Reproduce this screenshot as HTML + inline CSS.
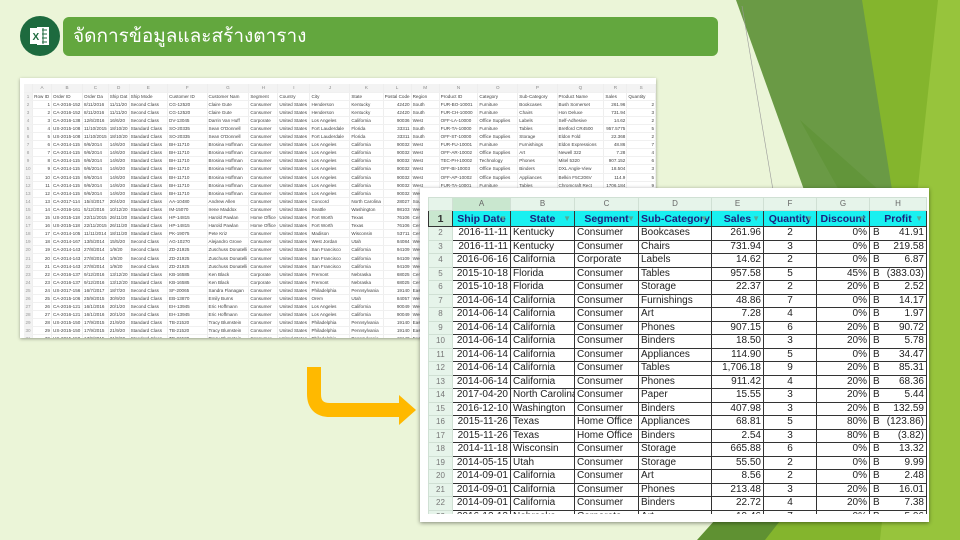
<!DOCTYPE html>
<html><head><meta charset="utf-8"><style>
*{margin:0;padding:0;box-sizing:border-box}
body{width:960px;height:540px;overflow:hidden;background:#ebf5d8;position:relative;font-family:"Liberation Sans",sans-serif}
.bg{position:absolute;left:0;top:0}
.title{position:absolute;left:63px;top:17px;width:655px;height:39px;background:#63a73e;border-radius:6px;color:#fff;font-family:"Liberation Sans","Noto Sans CJK SC",sans-serif;font-size:19px;line-height:39px;padding-left:10px}
.logo{position:absolute;left:20px;top:16px;width:40px;height:40px;border-radius:50%;background:#1d6a3e}
.small{position:absolute;left:20px;top:78px;width:636px;height:260px;background:#fff;box-shadow:0 1px 3px rgba(0,0,0,.35);overflow:hidden}
.small table{border-collapse:collapse;font-size:4.6px;color:#444;margin:6px 0 0 4px;table-layout:fixed}
.small td{height:8.1px;border-right:1px solid #eee;border-bottom:1px solid #f0f0f0;white-space:nowrap;overflow:hidden;padding:0 1px}
.small tr:first-child td{background:#f3f3f3;text-align:center;color:#888}
.small td:first-child{background:#f3f3f3;color:#999;text-align:center}
.big{position:absolute;left:420px;top:188px;width:509px;height:334px;background:#fff;box-shadow:0 1px 4px rgba(0,0,0,.45);overflow:hidden}
.big table{position:absolute;left:8px;top:9px;border-collapse:collapse;table-layout:fixed;font-size:10px;color:#222;width:498px}
.big td{height:13.5px;border:1px solid #333;padding:0 2px;white-space:nowrap;overflow:hidden;line-height:12px}
.big tr.L td{background:#e6f4ea;color:#666;font-size:8px;text-align:center;border:1px solid #d0e0d4;height:13px}
.big tr.L td.a{background:#c9e7cf}
.big tr.H td{background:#19f0f0;font-weight:bold;color:#1a237e;text-align:center;height:16px;border:1px solid #333;position:relative;font-size:10.5px}
.big tr.H td i{position:absolute;right:3px;top:2px;color:#5a9;font-size:8px;font-style:normal;font-weight:normal}
.big td.n{background:#e6f4ea;color:#777;font-size:8px;text-align:center;border:1px solid #d0e0d4}
.r{text-align:right}.c{text-align:center}
.b{float:left;padding-left:1px}
</style></head><body>
<svg class="bg" width="960" height="540">
<polygon points="862,0 960,0 960,540 760,540" fill="#84b52d"/>
<polygon points="938,0 960,0 960,540 880,540" fill="#97c43c"/>
<polygon points="736,0 862,0 930,430 890,430" fill="#6a9a45"/>
<polygon points="800,120 890,200 900,300" fill="#62953a"/>
<polygon points="697,540 765,540 820,470 760,470" fill="#5f9132"/>
<line x1="742" y1="6" x2="773" y2="190" stroke="#999" stroke-width="0.6"/>
</svg>
<div class="logo"><svg width="40" height="40"><rect x="17" y="11" width="12" height="18" fill="#fff"/><path d="M19 14h8M19 18h8M19 22h8M19 26h8M23 12v16" stroke="#1d6a3e" stroke-width="1"/><rect x="10" y="12" width="12" height="16" fill="#fff"/><text x="12.5" y="24" font-size="10" font-family="Liberation Sans" fill="#1d6a3e" font-weight="bold">X</text></svg></div>
<div class="title">จัดการข้อมูลและสร้างตาราง</div>

<div class="small"><table>
<colgroup><col width="10"><col width="20"><col width="32"><col width="22"><col width="20"><col width="44"><col width="54"><col width="34"><col width="30"><col width="34"><col width="46"><col width="34"><col width="24"><col width="42"><col width="44"><col width="48"><col width="50"><col width="36"><col width="24"><col width="40"></colgroup>
<tr><td></td><td>A</td><td>B</td><td>C</td><td>D</td><td>E</td><td>F</td><td>G</td><td>H</td><td>I</td><td>J</td><td>K</td><td>L</td><td>M</td><td>N</td><td>O</td><td>P</td><td>Q</td><td>R</td><td>S</td></tr>
<tr><td>1</td><td>Row ID</td><td>Order ID</td><td>Order Da</td><td>Ship Dat</td><td>Ship Mode</td><td>Customer ID</td><td>Customer Nam</td><td>Segment</td><td>Country</td><td>City</td><td>State</td><td>Postal Code</td><td>Region</td><td>Product ID</td><td>Category</td><td>Sub-Category</td><td>Product Name</td><td>Sales</td><td>Quantity</td></tr>
<tr><td>2</td><td class="r">1</td><td>CA-2016-152</td><td>8/11/2016</td><td>11/11/20</td><td>Second Class</td><td>CG-12520</td><td>Claire Gute</td><td>Consumer</td><td>United States</td><td>Henderson</td><td>Kentucky</td><td class="r">42420</td><td>South</td><td>FUR-BO-10001</td><td>Furniture</td><td>Bookcases</td><td>Bush Somerset</td><td class="r">261.96</td><td class="r">2</td></tr>
<tr><td>3</td><td class="r">2</td><td>CA-2016-152</td><td>8/11/2016</td><td>11/11/20</td><td>Second Class</td><td>CG-12520</td><td>Claire Gute</td><td>Consumer</td><td>United States</td><td>Henderson</td><td>Kentucky</td><td class="r">42420</td><td>South</td><td>FUR-CH-10000</td><td>Furniture</td><td>Chairs</td><td>Hon Deluxe</td><td class="r">731.94</td><td class="r">3</td></tr>
<tr><td>4</td><td class="r">3</td><td>CA-2016-138</td><td>12/6/2016</td><td>16/6/20</td><td>Second Class</td><td>DV-13045</td><td>Darrin Van Huff</td><td>Corporate</td><td>United States</td><td>Los Angeles</td><td>California</td><td class="r">90036</td><td>West</td><td>OFF-LA-10000</td><td>Office Supplies</td><td>Labels</td><td>Self-Adhesive</td><td class="r">14.62</td><td class="r">2</td></tr>
<tr><td>5</td><td class="r">4</td><td>US-2015-108</td><td>11/10/2015</td><td>18/10/20</td><td>Standard Class</td><td>SO-20335</td><td>Sean O'Donnell</td><td>Consumer</td><td>United States</td><td>Fort Lauderdale</td><td>Florida</td><td class="r">33311</td><td>South</td><td>FUR-TA-10000</td><td>Furniture</td><td>Tables</td><td>Bretford CR4500</td><td class="r">957.5775</td><td class="r">5</td></tr>
<tr><td>6</td><td class="r">5</td><td>US-2015-108</td><td>11/10/2015</td><td>18/10/20</td><td>Standard Class</td><td>SO-20335</td><td>Sean O'Donnell</td><td>Consumer</td><td>United States</td><td>Fort Lauderdale</td><td>Florida</td><td class="r">33311</td><td>South</td><td>OFF-ST-10000</td><td>Office Supplies</td><td>Storage</td><td>Eldon Fold</td><td class="r">22.368</td><td class="r">2</td></tr>
<tr><td>7</td><td class="r">6</td><td>CA-2014-115</td><td>9/6/2014</td><td>14/6/20</td><td>Standard Class</td><td>BH-11710</td><td>Brosina Hoffman</td><td>Consumer</td><td>United States</td><td>Los Angeles</td><td>California</td><td class="r">90032</td><td>West</td><td>FUR-FU-10001</td><td>Furniture</td><td>Furnishings</td><td>Eldon Expressions</td><td class="r">48.86</td><td class="r">7</td></tr>
<tr><td>8</td><td class="r">7</td><td>CA-2014-115</td><td>9/6/2014</td><td>14/6/20</td><td>Standard Class</td><td>BH-11710</td><td>Brosina Hoffman</td><td>Consumer</td><td>United States</td><td>Los Angeles</td><td>California</td><td class="r">90032</td><td>West</td><td>OFF-AR-10002</td><td>Office Supplies</td><td>Art</td><td>Newell 322</td><td class="r">7.28</td><td class="r">4</td></tr>
<tr><td>9</td><td class="r">8</td><td>CA-2014-115</td><td>9/6/2014</td><td>14/6/20</td><td>Standard Class</td><td>BH-11710</td><td>Brosina Hoffman</td><td>Consumer</td><td>United States</td><td>Los Angeles</td><td>California</td><td class="r">90032</td><td>West</td><td>TEC-PH-10002</td><td>Technology</td><td>Phones</td><td>Mitel 5320</td><td class="r">907.152</td><td class="r">6</td></tr>
<tr><td>10</td><td class="r">9</td><td>CA-2014-115</td><td>9/6/2014</td><td>14/6/20</td><td>Standard Class</td><td>BH-11710</td><td>Brosina Hoffman</td><td>Consumer</td><td>United States</td><td>Los Angeles</td><td>California</td><td class="r">90032</td><td>West</td><td>OFF-BI-10003</td><td>Office Supplies</td><td>Binders</td><td>DXL Angle-View</td><td class="r">18.504</td><td class="r">3</td></tr>
<tr><td>11</td><td class="r">10</td><td>CA-2014-115</td><td>9/6/2014</td><td>14/6/20</td><td>Standard Class</td><td>BH-11710</td><td>Brosina Hoffman</td><td>Consumer</td><td>United States</td><td>Los Angeles</td><td>California</td><td class="r">90032</td><td>West</td><td>OFF-AP-10002</td><td>Office Supplies</td><td>Appliances</td><td>Belkin F5C206V</td><td class="r">114.9</td><td class="r">5</td></tr>
<tr><td>12</td><td class="r">11</td><td>CA-2014-115</td><td>9/6/2014</td><td>14/6/20</td><td>Standard Class</td><td>BH-11710</td><td>Brosina Hoffman</td><td>Consumer</td><td>United States</td><td>Los Angeles</td><td>California</td><td class="r">90032</td><td>West</td><td>FUR-TA-10001</td><td>Furniture</td><td>Tables</td><td>Chromcraft Rect</td><td class="r">1706.184</td><td class="r">9</td></tr>
<tr><td>13</td><td class="r">12</td><td>CA-2014-115</td><td>9/6/2014</td><td>14/6/20</td><td>Standard Class</td><td>BH-11710</td><td>Brosina Hoffman</td><td>Consumer</td><td>United States</td><td>Los Angeles</td><td>California</td><td class="r">90032</td><td>West</td><td>TEC-PH-10002</td><td>Technology</td><td>Phones</td><td>Konftel 250</td><td class="r">911.424</td><td class="r">4</td></tr>
<tr><td>14</td><td class="r">13</td><td>CA-2017-114</td><td>15/4/2017</td><td>20/4/20</td><td>Standard Class</td><td>AA-10480</td><td>Andrew Allen</td><td>Consumer</td><td>United States</td><td>Concord</td><td>North Carolina</td><td class="r">28027</td><td>South</td><td>OFF-PA-10002</td><td>Office Supplies</td><td>Paper</td><td>Xerox 1967</td><td class="r">15.552</td><td class="r">3</td></tr>
<tr><td>15</td><td class="r">14</td><td>CA-2016-161</td><td>5/12/2016</td><td>10/12/20</td><td>Standard Class</td><td>IM-15070</td><td>Irene Maddox</td><td>Consumer</td><td>United States</td><td>Seattle</td><td>Washington</td><td class="r">98103</td><td>West</td><td>OFF-BI-10003</td><td>Office Supplies</td><td>Binders</td><td>Fellowes PB200</td><td class="r">407.976</td><td class="r">3</td></tr>
<tr><td>16</td><td class="r">15</td><td>US-2015-118</td><td>22/11/2015</td><td>26/11/20</td><td>Standard Class</td><td>HP-14815</td><td>Harold Pawlan</td><td>Home Office</td><td>United States</td><td>Fort Worth</td><td>Texas</td><td class="r">76106</td><td>Central</td><td>OFF-AP-10002</td><td>Office Supplies</td><td>Appliances</td><td>Holmes Replacement</td><td class="r">68.81</td><td class="r">5</td></tr>
<tr><td>17</td><td class="r">16</td><td>US-2015-118</td><td>22/11/2015</td><td>26/11/20</td><td>Standard Class</td><td>HP-14815</td><td>Harold Pawlan</td><td>Home Office</td><td>United States</td><td>Fort Worth</td><td>Texas</td><td class="r">76106</td><td>Central</td><td>OFF-BI-10000</td><td>Office Supplies</td><td>Binders</td><td>Storex DuraTech</td><td class="r">2.544</td><td class="r">3</td></tr>
<tr><td>18</td><td class="r">17</td><td>CA-2014-105</td><td>11/11/2014</td><td>18/11/20</td><td>Standard Class</td><td>PK-19075</td><td>Pete Kriz</td><td>Consumer</td><td>United States</td><td>Madison</td><td>Wisconsin</td><td class="r">53711</td><td>Central</td><td>OFF-ST-10000</td><td>Office Supplies</td><td>Storage</td><td>Stur-D-Stor</td><td class="r">665.88</td><td class="r">6</td></tr>
<tr><td>19</td><td class="r">18</td><td>CA-2014-167</td><td>13/5/2014</td><td>15/5/20</td><td>Second Class</td><td>AG-10270</td><td>Alejandro Grove</td><td>Consumer</td><td>United States</td><td>West Jordan</td><td>Utah</td><td class="r">84084</td><td>West</td><td>OFF-ST-10000</td><td>Office Supplies</td><td>Storage</td><td>Fellowes Super</td><td class="r">55.5</td><td class="r">2</td></tr>
<tr><td>20</td><td class="r">19</td><td>CA-2014-143</td><td>27/8/2014</td><td>1/9/20</td><td>Second Class</td><td>ZD-21925</td><td>Zuschuss Donatelli</td><td>Consumer</td><td>United States</td><td>San Francisco</td><td>California</td><td class="r">94109</td><td>West</td><td>OFF-AR-10002</td><td>Office Supplies</td><td>Art</td><td>Newell 341</td><td class="r">8.56</td><td class="r">2</td></tr>
<tr><td>21</td><td class="r">20</td><td>CA-2014-143</td><td>27/8/2014</td><td>1/9/20</td><td>Second Class</td><td>ZD-21925</td><td>Zuschuss Donatelli</td><td>Consumer</td><td>United States</td><td>San Francisco</td><td>California</td><td class="r">94109</td><td>West</td><td>TEC-PH-10001</td><td>Technology</td><td>Phones</td><td>Cisco SPA 501G</td><td class="r">213.48</td><td class="r">3</td></tr>
<tr><td>22</td><td class="r">21</td><td>CA-2014-143</td><td>27/8/2014</td><td>1/9/20</td><td>Second Class</td><td>ZD-21925</td><td>Zuschuss Donatelli</td><td>Consumer</td><td>United States</td><td>San Francisco</td><td>California</td><td class="r">94109</td><td>West</td><td>OFF-BI-10002</td><td>Office Supplies</td><td>Binders</td><td>Wilson Jones</td><td class="r">22.72</td><td class="r">4</td></tr>
<tr><td>23</td><td class="r">22</td><td>CA-2016-137</td><td>9/12/2016</td><td>13/12/20</td><td>Standard Class</td><td>KB-16585</td><td>Ken Black</td><td>Corporate</td><td>United States</td><td>Fremont</td><td>Nebraska</td><td class="r">68025</td><td>Central</td><td>OFF-AR-10000</td><td>Office Supplies</td><td>Art</td><td>Newell 318</td><td class="r">19.46</td><td class="r">7</td></tr>
<tr><td>24</td><td class="r">23</td><td>CA-2016-137</td><td>9/12/2016</td><td>13/12/20</td><td>Standard Class</td><td>KB-16585</td><td>Ken Black</td><td>Corporate</td><td>United States</td><td>Fremont</td><td>Nebraska</td><td class="r">68025</td><td>Central</td><td>OFF-AP-10001</td><td>Office Supplies</td><td>Appliances</td><td>Acco Six-Outlet</td><td class="r">60.34</td><td class="r">7</td></tr>
<tr><td>25</td><td class="r">24</td><td>US-2017-156</td><td>16/7/2017</td><td>18/7/20</td><td>Second Class</td><td>SF-20065</td><td>Sandra Flanagan</td><td>Consumer</td><td>United States</td><td>Philadelphia</td><td>Pennsylvania</td><td class="r">19140</td><td>East</td><td>FUR-CH-10002</td><td>Furniture</td><td>Chairs</td><td>Global Deluxe</td><td class="r">71.372</td><td class="r">2</td></tr>
<tr><td>26</td><td class="r">25</td><td>CA-2015-106</td><td>25/9/2015</td><td>30/9/20</td><td>Standard Class</td><td>EB-13870</td><td>Emily Burns</td><td>Consumer</td><td>United States</td><td>Orem</td><td>Utah</td><td class="r">84057</td><td>West</td><td>FUR-TA-10000</td><td>Furniture</td><td>Tables</td><td>Bretford</td><td class="r">1044.63</td><td class="r">3</td></tr>
<tr><td>27</td><td class="r">26</td><td>CA-2016-121</td><td>16/1/2016</td><td>20/1/20</td><td>Second Class</td><td>EH-13945</td><td>Eric Hoffmann</td><td>Consumer</td><td>United States</td><td>Los Angeles</td><td>California</td><td class="r">90049</td><td>West</td><td>OFF-BI-10001</td><td>Office Supplies</td><td>Binders</td><td>Wilson Jones</td><td class="r">11.648</td><td class="r">2</td></tr>
<tr><td>28</td><td class="r">27</td><td>CA-2016-121</td><td>16/1/2016</td><td>20/1/20</td><td>Second Class</td><td>EH-13945</td><td>Eric Hoffmann</td><td>Consumer</td><td>United States</td><td>Los Angeles</td><td>California</td><td class="r">90049</td><td>West</td><td>TEC-AC-10002</td><td>Technology</td><td>Accessories</td><td>Imation 8GB</td><td class="r">90.57</td><td class="r">3</td></tr>
<tr><td>29</td><td class="r">28</td><td>US-2015-150</td><td>17/9/2015</td><td>21/9/20</td><td>Standard Class</td><td>TB-21520</td><td>Tracy Blumstein</td><td>Consumer</td><td>United States</td><td>Philadelphia</td><td>Pennsylvania</td><td class="r">19140</td><td>East</td><td>FUR-BO-10004</td><td>Furniture</td><td>Bookcases</td><td>Riverside</td><td class="r">3083.43</td><td class="r">7</td></tr>
<tr><td>30</td><td class="r">29</td><td>US-2015-150</td><td>17/9/2015</td><td>21/9/20</td><td>Standard Class</td><td>TB-21520</td><td>Tracy Blumstein</td><td>Consumer</td><td>United States</td><td>Philadelphia</td><td>Pennsylvania</td><td class="r">19140</td><td>East</td><td>OFF-BI-10000</td><td>Office Supplies</td><td>Binders</td><td>Avery Recycled</td><td class="r">9.618</td><td class="r">2</td></tr>
<tr><td>31</td><td class="r">30</td><td>US-2015-150</td><td>17/9/2015</td><td>21/9/20</td><td>Standard Class</td><td>TB-21520</td><td>Tracy Blumstein</td><td>Consumer</td><td>United States</td><td>Philadelphia</td><td>Pennsylvania</td><td class="r">19140</td><td>East</td><td>FUR-FU-10004</td><td>Furniture</td><td>Furnishings</td><td>Howard Miller</td><td class="r">124.2</td><td class="r">3</td></tr>
<tr><td>32</td><td class="r">31</td><td>US-2015-150</td><td>17/9/2015</td><td>21/9/20</td><td>Standard Class</td><td>TB-21520</td><td>Tracy Blumstein</td><td>Consumer</td><td>United States</td><td>Philadelphia</td><td>Pennsylvania</td><td class="r">19140</td><td>East</td><td>OFF-EN-10001</td><td>Office Supplies</td><td>Envelopes</td><td>Poly String Tie</td><td class="r">3.264</td><td class="r">2</td></tr>
</table></div>

<svg style="position:absolute;left:300px;top:350px" width="120" height="80"><path d="M14 17 V44 Q14 60 30 60 H100" fill="none" stroke="#ffb900" stroke-width="14"/><polygon points="99,45 116,60 99,75" fill="#ffb900"/></svg>

<div class="big"><table>
<colgroup><col width="24"><col width="58"><col width="64"><col width="64"><col width="73"><col width="52"><col width="53"><col width="53"><col width="57"></colgroup>
<tr class="L"><td></td><td class="a">A</td><td>B</td><td>C</td><td>D</td><td>E</td><td>F</td><td>G</td><td>H</td></tr>
<tr class="H"><td class="n" style="background:#c9e7cf;color:#333">1</td><td>Ship Date<i>▼</i></td><td>State<i>▼</i></td><td>Segment<i>▼</i></td><td>Sub-Category<i>▼</i></td><td>Sales<i>▼</i></td><td>Quantity<i>▼</i></td><td>Discount<i>▼</i></td><td>Profit<i>▼</i></td></tr>
<tr><td class="n">2</td><td class="r">2016-11-11</td><td>Kentucky</td><td>Consumer</td><td>Bookcases</td><td class="r">261.96</td><td class="c">2</td><td class="r">0%</td><td class="r"><span class="b">B</span>41.91</td></tr>
<tr><td class="n">3</td><td class="r">2016-11-11</td><td>Kentucky</td><td>Consumer</td><td>Chairs</td><td class="r">731.94</td><td class="c">3</td><td class="r">0%</td><td class="r"><span class="b">B</span>219.58</td></tr>
<tr><td class="n">4</td><td class="r">2016-06-16</td><td>California</td><td>Corporate</td><td>Labels</td><td class="r">14.62</td><td class="c">2</td><td class="r">0%</td><td class="r"><span class="b">B</span>6.87</td></tr>
<tr><td class="n">5</td><td class="r">2015-10-18</td><td>Florida</td><td>Consumer</td><td>Tables</td><td class="r">957.58</td><td class="c">5</td><td class="r">45%</td><td class="r"><span class="b">B</span>(383.03)</td></tr>
<tr><td class="n">6</td><td class="r">2015-10-18</td><td>Florida</td><td>Consumer</td><td>Storage</td><td class="r">22.37</td><td class="c">2</td><td class="r">20%</td><td class="r"><span class="b">B</span>2.52</td></tr>
<tr><td class="n">7</td><td class="r">2014-06-14</td><td>California</td><td>Consumer</td><td>Furnishings</td><td class="r">48.86</td><td class="c">7</td><td class="r">0%</td><td class="r"><span class="b">B</span>14.17</td></tr>
<tr><td class="n">8</td><td class="r">2014-06-14</td><td>California</td><td>Consumer</td><td>Art</td><td class="r">7.28</td><td class="c">4</td><td class="r">0%</td><td class="r"><span class="b">B</span>1.97</td></tr>
<tr><td class="n">9</td><td class="r">2014-06-14</td><td>California</td><td>Consumer</td><td>Phones</td><td class="r">907.15</td><td class="c">6</td><td class="r">20%</td><td class="r"><span class="b">B</span>90.72</td></tr>
<tr><td class="n">10</td><td class="r">2014-06-14</td><td>California</td><td>Consumer</td><td>Binders</td><td class="r">18.50</td><td class="c">3</td><td class="r">20%</td><td class="r"><span class="b">B</span>5.78</td></tr>
<tr><td class="n">11</td><td class="r">2014-06-14</td><td>California</td><td>Consumer</td><td>Appliances</td><td class="r">114.90</td><td class="c">5</td><td class="r">0%</td><td class="r"><span class="b">B</span>34.47</td></tr>
<tr><td class="n">12</td><td class="r">2014-06-14</td><td>California</td><td>Consumer</td><td>Tables</td><td class="r">1,706.18</td><td class="c">9</td><td class="r">20%</td><td class="r"><span class="b">B</span>85.31</td></tr>
<tr><td class="n">13</td><td class="r">2014-06-14</td><td>California</td><td>Consumer</td><td>Phones</td><td class="r">911.42</td><td class="c">4</td><td class="r">20%</td><td class="r"><span class="b">B</span>68.36</td></tr>
<tr><td class="n">14</td><td class="r">2017-04-20</td><td>North Carolina</td><td>Consumer</td><td>Paper</td><td class="r">15.55</td><td class="c">3</td><td class="r">20%</td><td class="r"><span class="b">B</span>5.44</td></tr>
<tr><td class="n">15</td><td class="r">2016-12-10</td><td>Washington</td><td>Consumer</td><td>Binders</td><td class="r">407.98</td><td class="c">3</td><td class="r">20%</td><td class="r"><span class="b">B</span>132.59</td></tr>
<tr><td class="n">16</td><td class="r">2015-11-26</td><td>Texas</td><td>Home Office</td><td>Appliances</td><td class="r">68.81</td><td class="c">5</td><td class="r">80%</td><td class="r"><span class="b">B</span>(123.86)</td></tr>
<tr><td class="n">17</td><td class="r">2015-11-26</td><td>Texas</td><td>Home Office</td><td>Binders</td><td class="r">2.54</td><td class="c">3</td><td class="r">80%</td><td class="r"><span class="b">B</span>(3.82)</td></tr>
<tr><td class="n">18</td><td class="r">2014-11-18</td><td>Wisconsin</td><td>Consumer</td><td>Storage</td><td class="r">665.88</td><td class="c">6</td><td class="r">0%</td><td class="r"><span class="b">B</span>13.32</td></tr>
<tr><td class="n">19</td><td class="r">2014-05-15</td><td>Utah</td><td>Consumer</td><td>Storage</td><td class="r">55.50</td><td class="c">2</td><td class="r">0%</td><td class="r"><span class="b">B</span>9.99</td></tr>
<tr><td class="n">20</td><td class="r">2014-09-01</td><td>California</td><td>Consumer</td><td>Art</td><td class="r">8.56</td><td class="c">2</td><td class="r">0%</td><td class="r"><span class="b">B</span>2.48</td></tr>
<tr><td class="n">21</td><td class="r">2014-09-01</td><td>California</td><td>Consumer</td><td>Phones</td><td class="r">213.48</td><td class="c">3</td><td class="r">20%</td><td class="r"><span class="b">B</span>16.01</td></tr>
<tr><td class="n">22</td><td class="r">2014-09-01</td><td>California</td><td>Consumer</td><td>Binders</td><td class="r">22.72</td><td class="c">4</td><td class="r">20%</td><td class="r"><span class="b">B</span>7.38</td></tr>
<tr><td class="n">23</td><td class="r">2016-12-13</td><td>Nebraska</td><td>Corporate</td><td>Art</td><td class="r">19.46</td><td class="c">7</td><td class="r">0%</td><td class="r"><span class="b">B</span>5.06</td></tr>
</table><div style="position:absolute;left:0;top:326px;width:509px;height:8px;background:#fff"></div></div>
</body></html>
